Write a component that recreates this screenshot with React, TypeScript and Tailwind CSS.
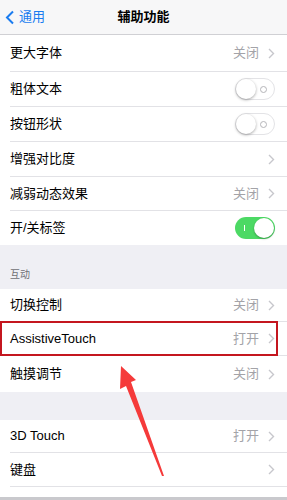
import { ReactNode } from 'react';

const FONT = { fontFamily: '"Liberation Sans", "Noto Sans CJK SC", sans-serif' };

function Chevron() {
  return (
    <svg width="7" height="11" viewBox="0 0 7 11" className="ml-[9px]">
      <path d="M1 1l4.5 4.5L1 10" fill="none" stroke="#c7c7cc" strokeWidth="1.4" />
    </svg>
  );
}

function Toggle({ on }: { on?: boolean }) {
  if (on) {
    return (
      <div className="relative w-[40px] h-[22px] rounded-full bg-[#4cd964] flex items-center justify-end pr-[1px]">
        <span className="absolute left-[9px] top-[8px] w-[1px] h-[6px] bg-white" />
        <span className="w-[20px] h-[20px] rounded-full bg-white shadow-[0_1px_2px_rgba(0,0,0,0.3)]" />
      </div>
    );
  }
  return (
    <div className="relative w-[40px] h-[22px] rounded-full border border-[#e3e3e6] bg-white flex items-center">
      <span className="w-[20px] h-[20px] rounded-full bg-white shadow-[0_1px_3px_rgba(0,0,0,0.35)]" />
      <span className="absolute right-[7px] top-[7px] w-[7px] h-[7px] rounded-full border border-[#b5b5b9]" />
    </div>
  );
}

function Row({
  label,
  value,
  chevron,
  right,
  h = 'h-[35px]',
  last,
  children,
}: {
  label: string;
  value?: string;
  chevron?: boolean;
  right?: ReactNode;
  h?: string;
  last?: boolean;
  children?: ReactNode;
}) {
  return (
    <div className={`relative bg-white pl-[10px] ${h}`}>
      <div className={`h-full flex items-center pr-[12px] ${last ? '' : 'border-b border-[#e2e2e6]'}`}>
        <span className="flex-1 text-[13px] text-black">{label}</span>
        {value && <span className="text-[13px] text-[#a3a3a8]">{value}</span>}
        {chevron && <Chevron />}
        {right}
      </div>
      {children}
    </div>
  );
}

export default function App() {
  return (
    <div className="relative w-[287px] h-[500px] overflow-hidden bg-[#efeff4]" style={FONT}>
      <div className="h-[35px] bg-[#f7f7f8] border-b border-[#d0d0d4] flex items-center relative">
        <div className="flex items-center pl-[5px] text-[#1a7cf0]">
          <svg width="10" height="15" viewBox="0 0 10 15">
            <path d="M8 1.5L2 7.5l6 6" fill="none" stroke="#1a7cf0" strokeWidth="2" />
          </svg>
          <span className="ml-[4px] text-[13px]">通用</span>
        </div>
        <span className="absolute left-0 right-0 text-center text-[13px] font-bold text-black pointer-events-none">
          辅助功能
        </span>
      </div>

      <div>
        <Row label="更大字体" value="关闭" chevron h="h-[37px]" />
        <Row label="粗体文本" right={<Toggle />} />
        <Row label="按钮形状" right={<Toggle />} />
        <Row label="增强对比度" chevron />
        <Row label="减弱动态效果" value="关闭" chevron h="h-[34px]" />
        <Row label="开/关标签" right={<Toggle on />} h="h-[34px]" last />
      </div>

      <div className="h-[44px] flex items-end pl-[10px] pb-[7px]">
        <span className="text-[10px] text-[#707075]">互动</span>
      </div>

      <div>
        <Row label="切换控制" value="关闭" chevron h="h-[33px]" />
        <Row label="AssistiveTouch" value="打开" chevron h="h-[34px]">
          <div className="absolute left-0 top-[-1px] w-[278px] h-[35px] border-2 border-[#c4161f]" />
        </Row>
        <Row label="触摸调节" value="关闭" chevron h="h-[36px]" last />
      </div>

      <div className="h-[28px]" />

      <div>
        <Row label="3D Touch" value="打开" chevron h="h-[33px]" />
        <Row label="键盘" chevron h="h-[34px]" />
        <div className="h-[10px] bg-white" />
      </div>
      <div className="h-[3px] bg-[#c9c9cd]" />

      <svg className="absolute left-0 top-0 pointer-events-none" width="287" height="500">
        <polygon
          points="121,366 136,380 131,382 164,476 162,476 126,386 120,389"
          fill="#f53a3a"
        />
      </svg>
    </div>
  );
}
